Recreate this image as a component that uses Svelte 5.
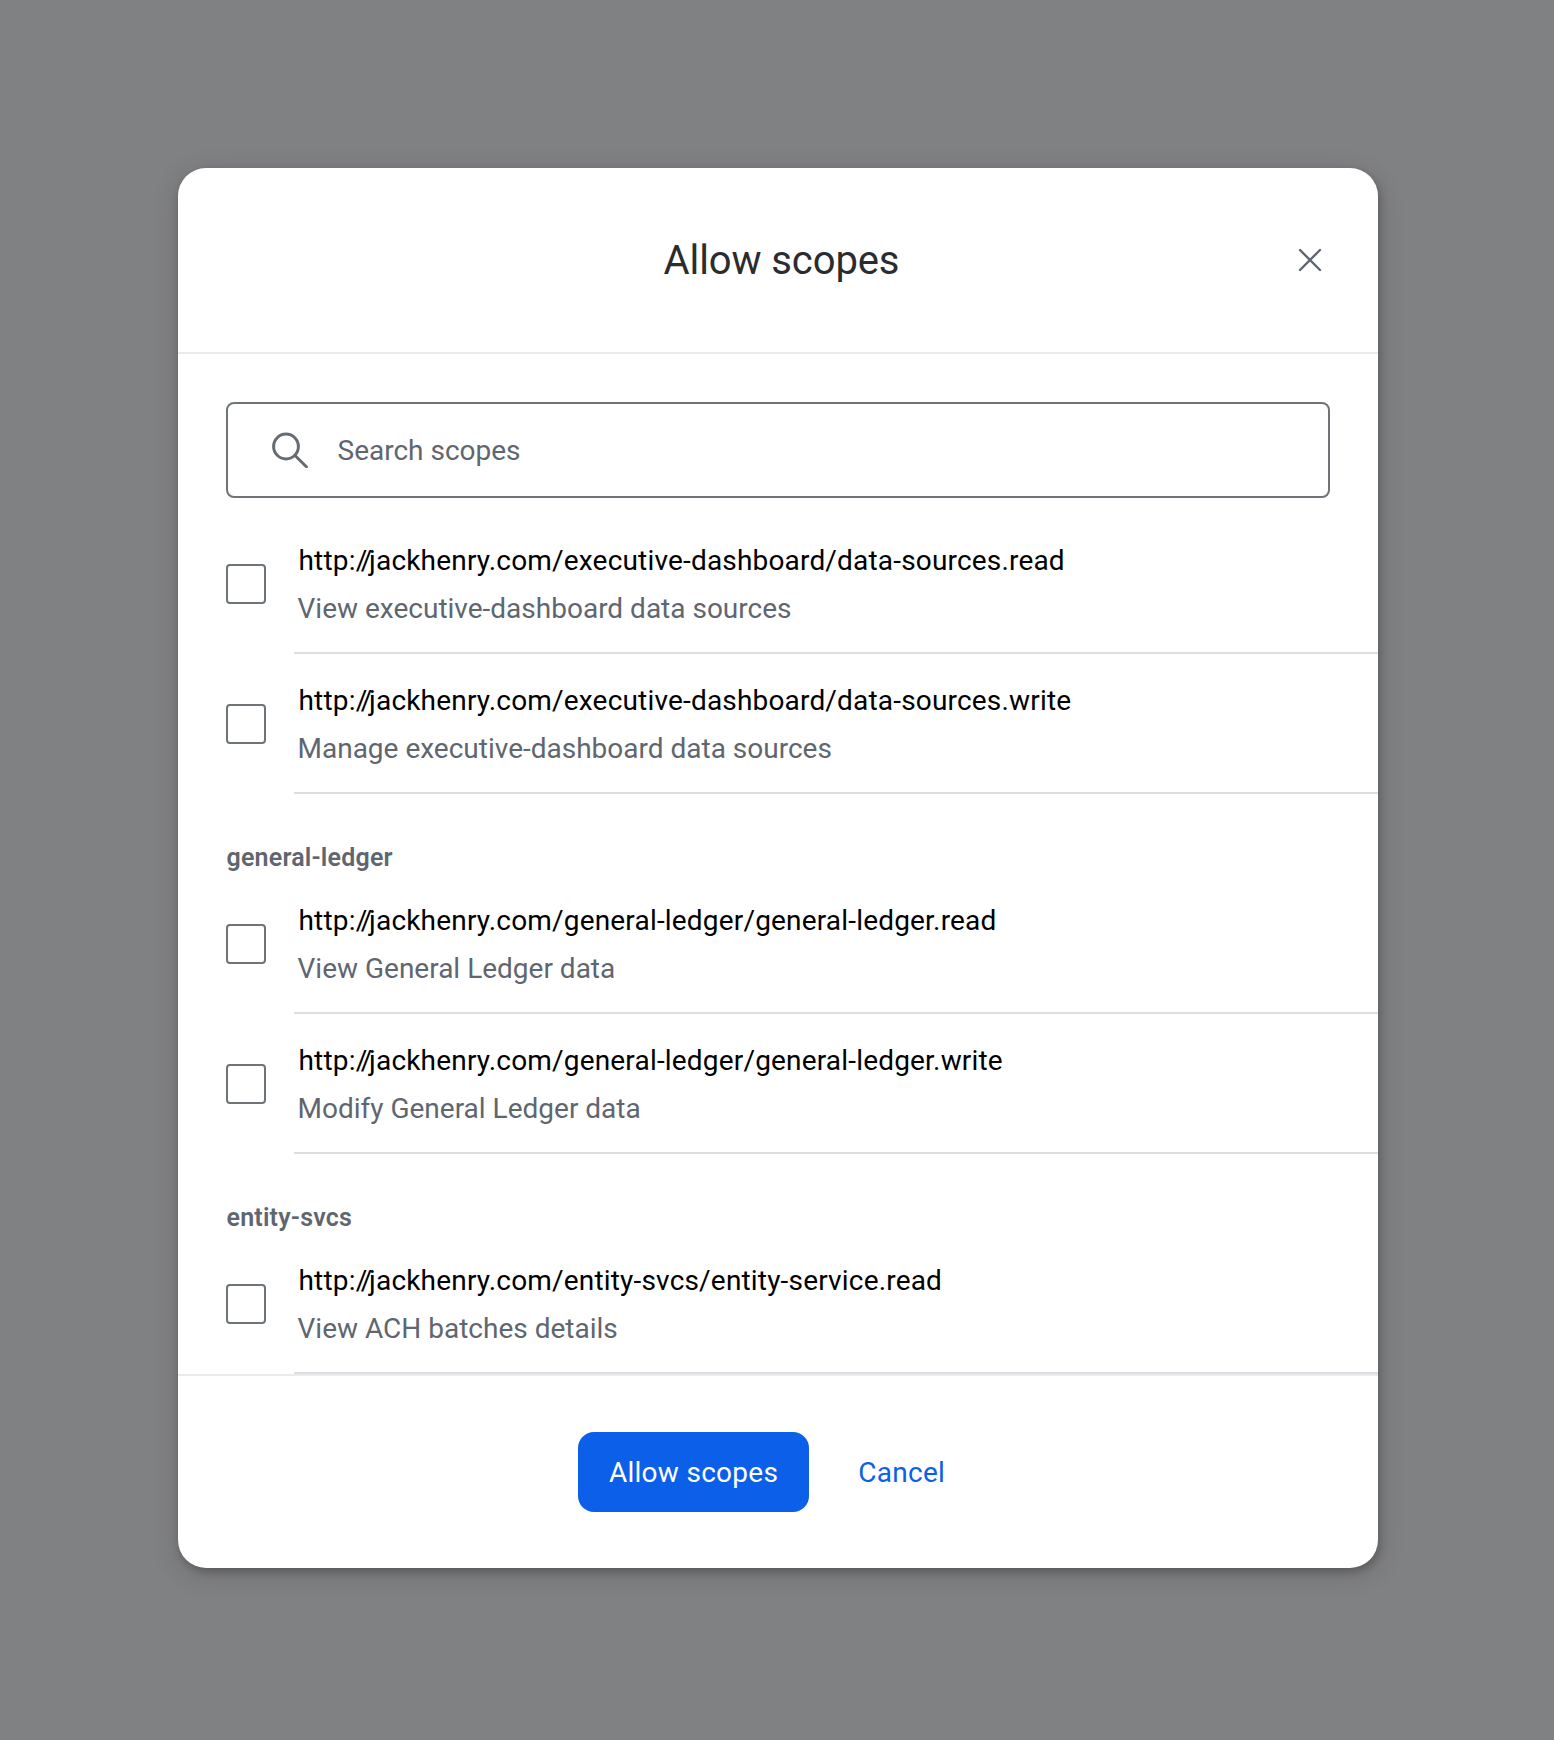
<script>
    const groups = [
        {
            name: "",
            scopes: [
                {path: "jackhenry.com/executive-dashboard/data-sources.read", text: "View executive-dashboard data sources"},
                {path: "jackhenry.com/executive-dashboard/data-sources.write", text: "Manage executive-dashboard data sources"}
            ]
        },
        {
            name: "general-ledger",
            scopes: [
                {path: "jackhenry.com/general-ledger/general-ledger.read", text: "View General Ledger data"},
                {path: "jackhenry.com/general-ledger/general-ledger.write", text: "Modify General Ledger data"}
            ]
        },
        {
            name: "entity-svcs",
            scopes: [
                {path: "jackhenry.com/entity-svcs/entity-service.read", text: "View ACH batches details"}
            ]
        }
    ];
</script>

<main>
    <div class="modal">
        <header>
            <span class="spacer"></span>
            <h1>Allow scopes</h1>
            <button class="close" aria-label="Close">
                <svg width="24" height="24" viewBox="0 0 24 24">
                    <path d="M2 2 L22 22 M22 2 L2 22" fill="none" stroke="#5f6670" stroke-width="2.4" stroke-linecap="round"/>
                </svg>
            </button>
        </header>
        <div class="body">
            <label class="search">
                <svg width="36" height="36" viewBox="0 0 36 36">
                    <circle cx="14" cy="14.5" r="12.4" fill="none" stroke="#666c74" stroke-width="3"/>
                    <path d="M23.5 24 L34.4 34.8" fill="none" stroke="#666c74" stroke-width="3" stroke-linecap="round"/>
                </svg>
                <input type="text" placeholder="Search scopes"/>
            </label>
            {#each groups as group}
                {#if group.name}
                    <h2>{group.name}</h2>
                {/if}
                {#each group.scopes as scope}
                    <div class="row">
                        <input class="check" type="checkbox"/>
                        <div class="info">
                            <div class="url">http:<span class="slashes">//</span>{scope.path}</div>
                            <div class="desc">{scope.text}</div>
                        </div>
                    </div>
                {/each}
            {/each}
        </div>
        <footer>
            <button class="allow">Allow scopes</button>
            <button class="cancel">Cancel</button>
        </footer>
    </div>
</main>

<style>
    :global(body) {
        margin: 0;
        background: #808183;
    }

    main {
        height: 1740px;
        display: flex;
        justify-content: center;
        padding-top: 168px;
        box-sizing: border-box;
        font-family: Roboto, "Liberation Sans", sans-serif;
    }

    .modal {
        width: 1200px;
        height: 1400px;
        margin-left: 1px;
        background: #fff;
        border-radius: 28px;
        box-shadow: 2px 4px 8px rgba(0, 0, 0, 0.22), 0 6px 28px rgba(0, 0, 0, 0.14);
        display: flex;
        flex-direction: column;
        overflow: hidden;
    }

    header {
        height: 184px;
        flex: none;
        display: flex;
        align-items: center;
        padding: 0 48px;
        border-bottom: 2px solid #e8ecef;
    }

    .spacer {
        width: 48px;
    }

    h1 {
        flex: 1;
        margin: 0;
        text-align: center;
        font-size: 40px;
        font-weight: 450;
        letter-spacing: -0.1px;
        color: #2a2c2e;
    }

    .close {
        width: 40px;
        height: 40px;
        padding: 0;
        border: 0;
        background: none;
        display: flex;
        align-items: center;
        justify-content: center;
    }

    .body {
        flex: 1;
        min-height: 0;
        overflow: hidden;
        padding-top: 48px;
    }

    .search {
        display: flex;
        align-items: center;
        box-sizing: border-box;
        width: 1104px;
        height: 96px;
        margin: 0 0 16px 48px;
        padding-left: 44px;
        border: 2px solid #6f7479;
        border-radius: 8px;
    }

    .search input {
        flex: 1;
        margin-left: 30px;
        padding: 0;
        border: 0;
        outline: 0;
        font: inherit;
        font-size: 28px;
        color: #5f6670;
    }

    .search input::placeholder {
        color: #5f6670;
        opacity: 1;
    }

    h2 {
        margin: 0;
        padding: 48px 0 0 49px;
        font-size: 25px;
        line-height: 32px;
        font-weight: 600;
        letter-spacing: 0.2px;
        color: #5f6670;
    }

    .row {
        height: 140px;
        box-sizing: border-box;
        display: flex;
        align-items: center;
    }

    .check {
        appearance: none;
        flex: none;
        box-sizing: border-box;
        width: 40px;
        height: 40px;
        margin: 0 28px 0 48px;
        border: 2px solid #6f7479;
        border-radius: 4px;
    }

    .info {
        flex: 1;
        height: 140px;
        box-sizing: border-box;
        padding: 25px 0 0 5px;
        border-bottom: 2px solid #dcdddf;
    }

    .url {
        font-size: 28px;
        line-height: 44px;
        font-weight: 450;
        letter-spacing: 0.18px;
        color: #000;
    }

    .slashes {
        letter-spacing: -3.3px;
    }

    .desc {
        margin-top: 4px;
        margin-left: -1px;
        font-size: 28px;
        line-height: 44px;
        color: #5f6670;
    }

    footer {
        flex: none;
        display: flex;
        justify-content: center;
        gap: 17px;
        padding: 56px 0;
        border-top: 2px solid #e8ecef;
    }

    footer button {
        height: 80px;
        padding: 0 32px;
        border: 0;
        border-radius: 16px;
        font: inherit;
        font-size: 28px;
        font-weight: 450;
        letter-spacing: 0.28px;
    }

    .allow {
        padding: 0 31px;
        background: #0b5fe8;
        color: #fff;
    }

    .cancel {
        background: none;
        color: #0b5fe8;
    }
</style>
